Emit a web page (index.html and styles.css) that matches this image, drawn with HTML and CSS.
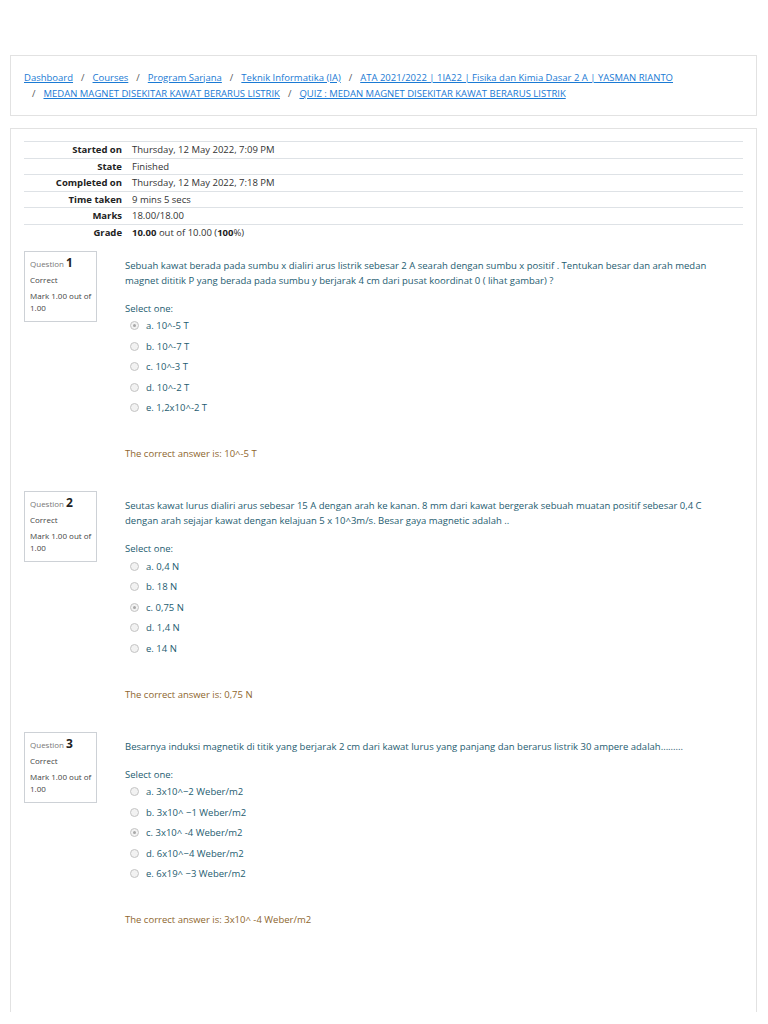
FILE: index.html
```html
<!DOCTYPE html>
<html lang="id">
<head>
  <meta charset="UTF-8" />
  <meta name="viewport" content="width=device-width, initial-scale=1.0"/>
  <title>QUIZ : MEDAN MAGNET DISEKITAR KAWAT BERARUS LISTRIK: Attempt review</title>
  <link rel="stylesheet" href="styles.css">
</head>
<body>
  <div class="page">
    <!-- navigasi breadcrumb -->
    <nav class="crumbs">
      <ol>
        <li><a href="#">Dashboard</a></li>
        <li><a href="#">Courses</a></li>
        <li><a href="#">Program Sarjana</a></li>
        <li><a href="#">Teknik Informatika (IA)</a></li>
        <li><a href="#">ATA 2021/2022 | 1IA22 | Fisika dan Kimia Dasar 2 A | YASMAN RIANTO</a></li>
        <li><a href="#">MEDAN MAGNET DISEKITAR KAWAT BERARUS LISTRIK</a></li>
        <li><a href="#">QUIZ : MEDAN MAGNET DISEKITAR KAWAT BERARUS LISTRIK</a></li>
      </ol>
    </nav>

    <div class="main">
      <!-- ringkasan attempt -->
      <table class="summary">
        <tr><th>Started on</th><td>Thursday, 12 May 2022, 7:09 PM</td></tr>
        <tr><th>State</th><td>Finished</td></tr>
        <tr><th>Completed on</th><td>Thursday, 12 May 2022, 7:18 PM</td></tr>
        <tr><th>Time taken</th><td>9 mins 5 secs</td></tr>
        <tr><th>Marks</th><td>18.00/18.00</td></tr>
        <tr><th>Grade</th><td><b>10.00</b> out of 10.00 (<b>100</b>%)</td></tr>
      </table>

      <!-- soal 1 -->
      <div class="que">
        <div class="info">
          <div class="no">Question <span class="qno">1</span></div>
          <div class="state">Correct</div>
          <div class="grade">Mark 1.00 out of 1.00</div>
        </div>
        <div class="content">
          <p class="qtext">Sebuah kawat berada pada sumbu x dialiri arus listrik sebesar 2 A searah dengan sumbu x positif . Tentukan besar dan arah medan magnet dititik P yang berada pada sumbu y berjarak 4 cm dari pusat koordinat 0 ( lihat gambar) ?</p>
          <div class="prompt">Select one:</div>
          <div class="answer">
            <div class="opt"><span class="radio checked"></span>a. 10^-5 T</div>
            <div class="opt"><span class="radio"></span>b. 10^-7 T</div>
            <div class="opt"><span class="radio"></span>c. 10^-3 T</div>
            <div class="opt"><span class="radio"></span>d. 10^-2 T</div>
            <div class="opt"><span class="radio"></span>e. 1,2x10^-2 T</div>
          </div>
          <div class="rightanswer">The correct answer is: 10^-5 T</div>
        </div>
      </div>

      <!-- soal 2 -->
      <div class="que">
        <div class="info">
          <div class="no">Question <span class="qno">2</span></div>
          <div class="state">Correct</div>
          <div class="grade">Mark 1.00 out of 1.00</div>
        </div>
        <div class="content">
          <p class="qtext">Seutas kawat lurus dialiri arus sebesar 15 A dengan arah ke kanan. 8 mm dari kawat bergerak sebuah muatan positif sebesar 0,4 C dengan arah sejajar kawat dengan kelajuan 5 x 10^3m/s. Besar gaya magnetic adalah ..</p>
          <div class="prompt">Select one:</div>
          <div class="answer">
            <div class="opt"><span class="radio"></span>a. 0,4 N</div>
            <div class="opt"><span class="radio"></span>b. 18 N</div>
            <div class="opt"><span class="radio checked"></span>c. 0,75 N</div>
            <div class="opt"><span class="radio"></span>d. 1,4 N</div>
            <div class="opt"><span class="radio"></span>e. 14 N</div>
          </div>
          <div class="rightanswer">The correct answer is: 0,75 N</div>
        </div>
      </div>

      <!-- soal 3 -->
      <div class="que">
        <div class="info">
          <div class="no">Question <span class="qno">3</span></div>
          <div class="state">Correct</div>
          <div class="grade">Mark 1.00 out of 1.00</div>
        </div>
        <div class="content">
          <p class="qtext">Besarnya induksi magnetik di titik yang berjarak 2 cm dari kawat lurus yang panjang dan berarus listrik 30 ampere adalah.........</p>
          <div class="prompt">Select one:</div>
          <div class="answer">
            <div class="opt"><span class="radio"></span>a. 3x10^&minus;2 Weber/m2</div>
            <div class="opt"><span class="radio"></span>b. 3x10^ &minus;1 Weber/m2</div>
            <div class="opt"><span class="radio checked"></span>c. 3x10^ -4 Weber/m2</div>
            <div class="opt"><span class="radio"></span>d. 6x10^&minus;4 Weber/m2</div>
            <div class="opt"><span class="radio"></span>e. 6x19^ &minus;3 Weber/m2</div>
          </div>
          <div class="rightanswer">The correct answer is: 3x10^ -4 Weber/m2</div>
        </div>
      </div>
    </div>
  </div>
</body>
</html>
```

FILE: styles.css
```css
body {
  font-family: 'Open Sans', 'Noto Sans', sans-serif;
  margin: 0;
  background-color: #fff;
  color: #333;
  font-size: 9.5px;
  line-height: 15px;
}
.page {
  padding: 55px 11px 0 10px;
  height: 957px;
  overflow: hidden;
}
a {
  color: #1a7ad4;
  text-decoration: underline;
}
.crumbs {
  border: 1px solid #e2e2e2;
  padding: 14px 13px 13px;
  line-height: 16px;
}
.crumbs ol {
  display: flex;
  flex-wrap: wrap;
  list-style: none;
  margin: 0;
  padding: 0;
}
/* separator belongs to the next item, so it wraps with it */
.crumbs li + li::before {
  content: '/';
  color: #555;
  padding: 0 8px;
}
.main {
  margin-top: 12px;
  border: 1px solid #e2e2e2;
  border-bottom: none;
  padding: 12px 13px 0;
  height: 100%;
}
.summary {
  width: 100%;
  border-collapse: collapse;
  margin-bottom: 10px;
}
.summary th, .summary td {
  border-top: 1px solid #dee2e6;
  padding: 0;
  height: 15.6px;
  line-height: 15.6px;
  text-align: left;
  font-weight: normal;
}
.summary th {
  width: 98px;
  text-align: right;
  font-weight: bold;
  color: #222;
}
.summary td {
  padding-left: 10px;
}
.summary td b {
  color: #222;
}
.que {
  display: flex;
  gap: 28px;
  margin-bottom: 30px;
}
.info {
  width: 66px;
  flex: none;
  align-self: flex-start;
  border: 1px solid #cdd1d6;
  padding: 5px 0 7px 5px;
  font-size: 8px;
  line-height: 12px;
  color: #444;
}
.info .no {
  color: #777;
  margin-bottom: 4px;
}
.info .qno {
  font-size: 12px;
  font-weight: bold;
  color: #222;
}
.info .state {
  margin-bottom: 4px;
}
.content {
  flex: 1;
  padding: 7px 10px 0 0;
  color: #1e5c70;
}
.qtext {
  margin: 0 0 13px;
}
.answer {
  margin-bottom: 28px;
}
.opt {
  display: flex;
  align-items: center;
  height: 20.5px;
  padding-left: 5px;
}
.radio {
  width: 7px;
  height: 7px;
  border: 1px solid #c4c4c4;
  border-radius: 50%;
  background-color: #f2f2f2;
  margin-right: 7px;
  position: relative;
}
.radio.checked::after {
  content: '';
  position: absolute;
  left: 2px;
  top: 2px;
  width: 3px;
  height: 3px;
  border-radius: 50%;
  background-color: #a8a8a8;
}
.rightanswer {
  color: #8e662e;
}
```
